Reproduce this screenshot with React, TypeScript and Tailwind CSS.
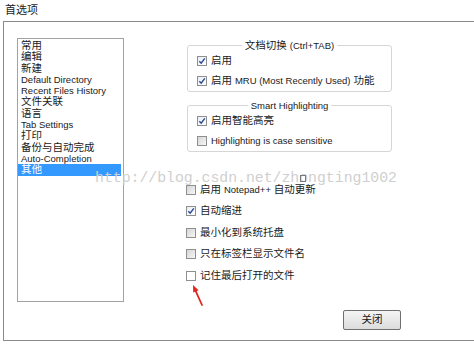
import type { ReactNode } from 'react';

// Latin text runs a little smaller than the CJK glyphs in the original dialog
function En({ children }: { children: ReactNode }) {
  return <span className="text-[9.5px]">{children}</span>;
}

function CheckBox({ checked = false, plain = false }: { checked?: boolean; plain?: boolean }) {
  const face = plain
    ? 'bg-white'
    : checked
      ? 'bg-linear-to-br from-[#e9eef6] to-[#ffffff]'
      : 'bg-linear-to-br from-[#d6d6d6] to-[#f6f6f6]';
  return (
    <span className={`flex h-[10px] w-[10px] shrink-0 items-center justify-center border border-[#8e8f8f] ${face}`}>
      {checked && (
        <svg width="8" height="8" viewBox="0 0 8 8">
          <path d="M1.3 4.2 L3.2 6.2 L6.8 1.4" fill="none" stroke="#2d4a94" strokeWidth="1.5" />
        </svg>
      )}
    </span>
  );
}

function Row({ checked, plain, children }: { checked?: boolean; plain?: boolean; children: ReactNode }) {
  return (
    <div className="flex h-[20px] items-center gap-[4px]">
      <CheckBox checked={checked} plain={plain} />
      <span className="whitespace-nowrap">{children}</span>
    </div>
  );
}

function GroupBox({ title, children }: { title: ReactNode; children: ReactNode }) {
  return (
    <div className="relative ml-[1px] w-[205px] rounded-[3px] border border-[#d6d6d6] pl-[9px] pt-[5px]">
      <span className="absolute left-1/2 top-[-7px] -translate-x-1/2 whitespace-nowrap bg-white px-[3px] leading-[13px]">
        {title}
      </span>
      {children}
    </div>
  );
}

const pages = [
  '常用',
  '编辑',
  '新建',
  'Default Directory',
  'Recent Files History',
  '文件关联',
  '语言',
  'Tab Settings',
  '打印',
  '备份与自动完成',
  'Auto-Completion',
  '其他',
];

export default function App() {
  const selected = '其他';

  return (
    <div className="relative h-[345px] w-[474px] overflow-hidden bg-white font-['Liberation_Sans','Noto_Sans_CJK_SC',sans-serif] text-[10.5px] text-[#1a1a1a]">
      <div className="h-[21px] pl-[5px] pt-[3px] text-[11px] leading-[14px]">首选项</div>

      <div className="ml-[3px] flex h-[320px] border-b border-l border-t border-[#8a8a8a]">
        {/* page list */}
        <div className="ml-[13px] mt-[16px] h-[264px] w-[107px] shrink-0 border border-[#a2a2a2] pt-[1px]">
          {pages.map((p) => {
            const isLatin = /^[A-Za-z]/.test(p);
            return (
              <div
                key={p}
                className={`mr-[2px] pl-[3px] leading-[11.3px] whitespace-nowrap ${
                  p === selected ? 'bg-[#3399ff] text-white' : ''
                } ${isLatin ? 'text-[9.5px]' : ''}`}
              >
                {p}
              </div>
            );
          })}
        </div>

        {/* options */}
        <div className="ml-[62px] flex w-[216px] flex-col pt-[23px]">
          <GroupBox
            title={
              <>
                文档切换 <En>(Ctrl+TAB)</En>
              </>
            }
          >
            <Row checked>启用</Row>
            <Row checked>
              启用 <En>MRU (Most Recently Used)</En> 功能
            </Row>
          </GroupBox>

          <div className="mt-[13px]">
            <GroupBox title={<En>Smart Highlighting</En>}>
              <Row checked>启用智能高亮</Row>
              <Row>
                <En>Highlighting is case sensitive</En>
              </Row>
            </GroupBox>
          </div>

          <div className="mt-[27px] flex flex-col">
            {[
              { label: <>启用 <En>Notepad++</En> 自动更新</>, checked: false },
              { label: <>自动缩进</>, checked: true },
              { label: <>最小化到系统托盘</>, checked: false },
              { label: <>只在标签栏显示文件名</>, checked: false },
              { label: <>记住最后打开的文件</>, checked: false, plain: true },
            ].map((r, i) => (
              <div key={i} className="flex h-[21.5px] items-center gap-[4px]">
                <CheckBox checked={r.checked} plain={r.plain} />
                <span className="whitespace-nowrap">{r.label}</span>
              </div>
            ))}
          </div>

          <button className="ml-[157px] mt-[23px] flex h-[20px] w-[58px] items-center justify-center rounded-[2px] border border-[#707070] bg-linear-to-b from-[#f4f4f4] to-[#dcdcdc] text-[10.5px]">
            关闭
          </button>
        </div>
      </div>

      {/* watermark */}
      <div className="pointer-events-none absolute left-[95px] top-[171px] whitespace-nowrap font-['Liberation_Mono',monospace] text-[14.8px] leading-[15px] text-[#cfcfcf]">
        http://blog.csdn.net/zhongting1002
      </div>
      <span className="absolute left-[300px] top-[175px] h-[7px] w-[6px] border border-[#7a7a7a]" />

      {/* red arrow */}
      <svg className="absolute left-[186px] top-[282px]" width="20" height="26" viewBox="0 0 20 26">
        <path d="M9.6 8.8 L16 23" stroke="#e3261f" strokeWidth="1.8" strokeLinecap="round" />
        <path d="M7 3 L12.6 8.2 L7.2 10.6 Z" fill="#e3261f" />
      </svg>
    </div>
  );
}
